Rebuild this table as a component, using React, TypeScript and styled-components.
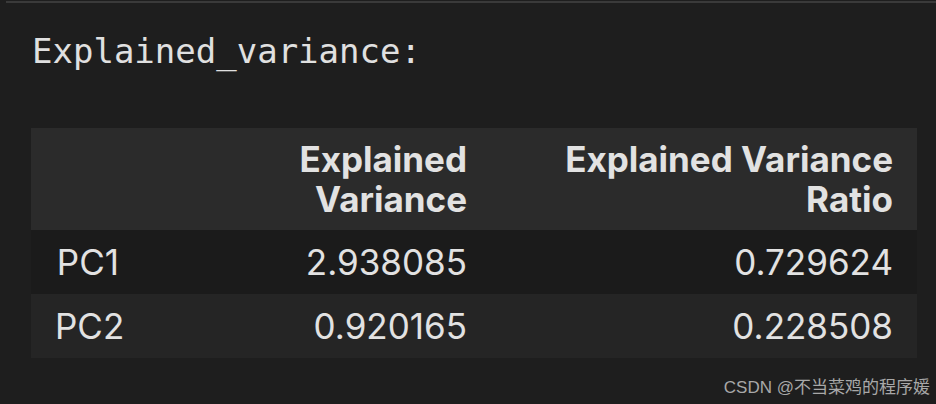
import React from "react"
import styled, { createGlobalStyle } from "styled-components"

const GlobalStyle = createGlobalStyle`
  html, body {
    margin: 0;
    padding: 0;
    background: #1e1e1e;
  }
`

type Row = {
  name: string,
  variance: string,
  ratio: string,
}

const rows: Row[] = [
  { name: "PC1", variance: "2.938085", ratio: "0.729624" },
  { name: "PC2", variance: "0.920165", ratio: "0.228508" },
]

export default function App(): JSX.Element {
  return (
    <Page>
      <GlobalStyle />
      <TopRule />
      <Output>
        <Title>Explained_variance:</Title>
        <Table>
          <colgroup>
            <col style={{ width: 112 }} />
            <col style={{ width: 348 }} />
            <col style={{ width: 426 }} />
          </colgroup>
          <thead>
            <HeadRow>
              <Th />
              <Th>Explained Variance</Th>
              <Th>Explained Variance Ratio</Th>
            </HeadRow>
          </thead>
          <tbody>
            {rows.map((row, i) => (
              <BodyRow key={row.name} $striped={i % 2 === 1}>
                <Td>{row.name}</Td>
                <Td>{row.variance}</Td>
                <Td>{row.ratio}</Td>
              </BodyRow>
            ))}
          </tbody>
        </Table>
      </Output>
      <Watermark>CSDN @不当菜鸡的程序媛</Watermark>
    </Page>
  )
}

const Page = styled.div`
  position: relative;
  width: 936px;
  height: 404px;
  overflow: hidden;
  background: #1e1e1e;
`

const TopRule = styled.div`
  margin: 1px 0 0 6px;
  height: 2px;
  background: #3a3a3a;
`

const Output = styled.div`
  padding: 26px 0 0 31px;
`

const Title = styled.div`
  font-family: "DejaVu Sans Mono", "Liberation Mono", monospace;
  font-size: 34px;
  line-height: 44px;
  color: #e0e0e0;
  margin-left: 1px;
`

const Table = styled.table`
  margin-top: 55px;
  border-collapse: collapse;
  table-layout: fixed;
  width: 886px;
  font-family: Inter, "Liberation Sans", sans-serif;
  color: #e2e2e2;
`

const HeadRow = styled.tr`
  background: #2b2b2b;
  height: 102px;
`

const Th = styled.th`
  text-align: right;
  padding: 0 24px;
  font-size: 35px;
  font-weight: 700;
  line-height: 40px;
  vertical-align: middle;
`

const BodyRow = styled.tr<{ $striped: boolean }>`
  background: ${(p) => (p.$striped ? "#252525" : "#1b1b1b")};
  height: 64px;
`

const Td = styled.td`
  text-align: right;
  padding: 0 24px;
  font-size: 35px;
  font-weight: 400;
  vertical-align: middle;
`

const Watermark = styled.div`
  position: absolute;
  right: 6px;
  bottom: 6px;
  font-family: "Liberation Sans", "Noto Sans CJK SC", sans-serif;
  font-size: 17px;
  color: #a8a8a8;
`
